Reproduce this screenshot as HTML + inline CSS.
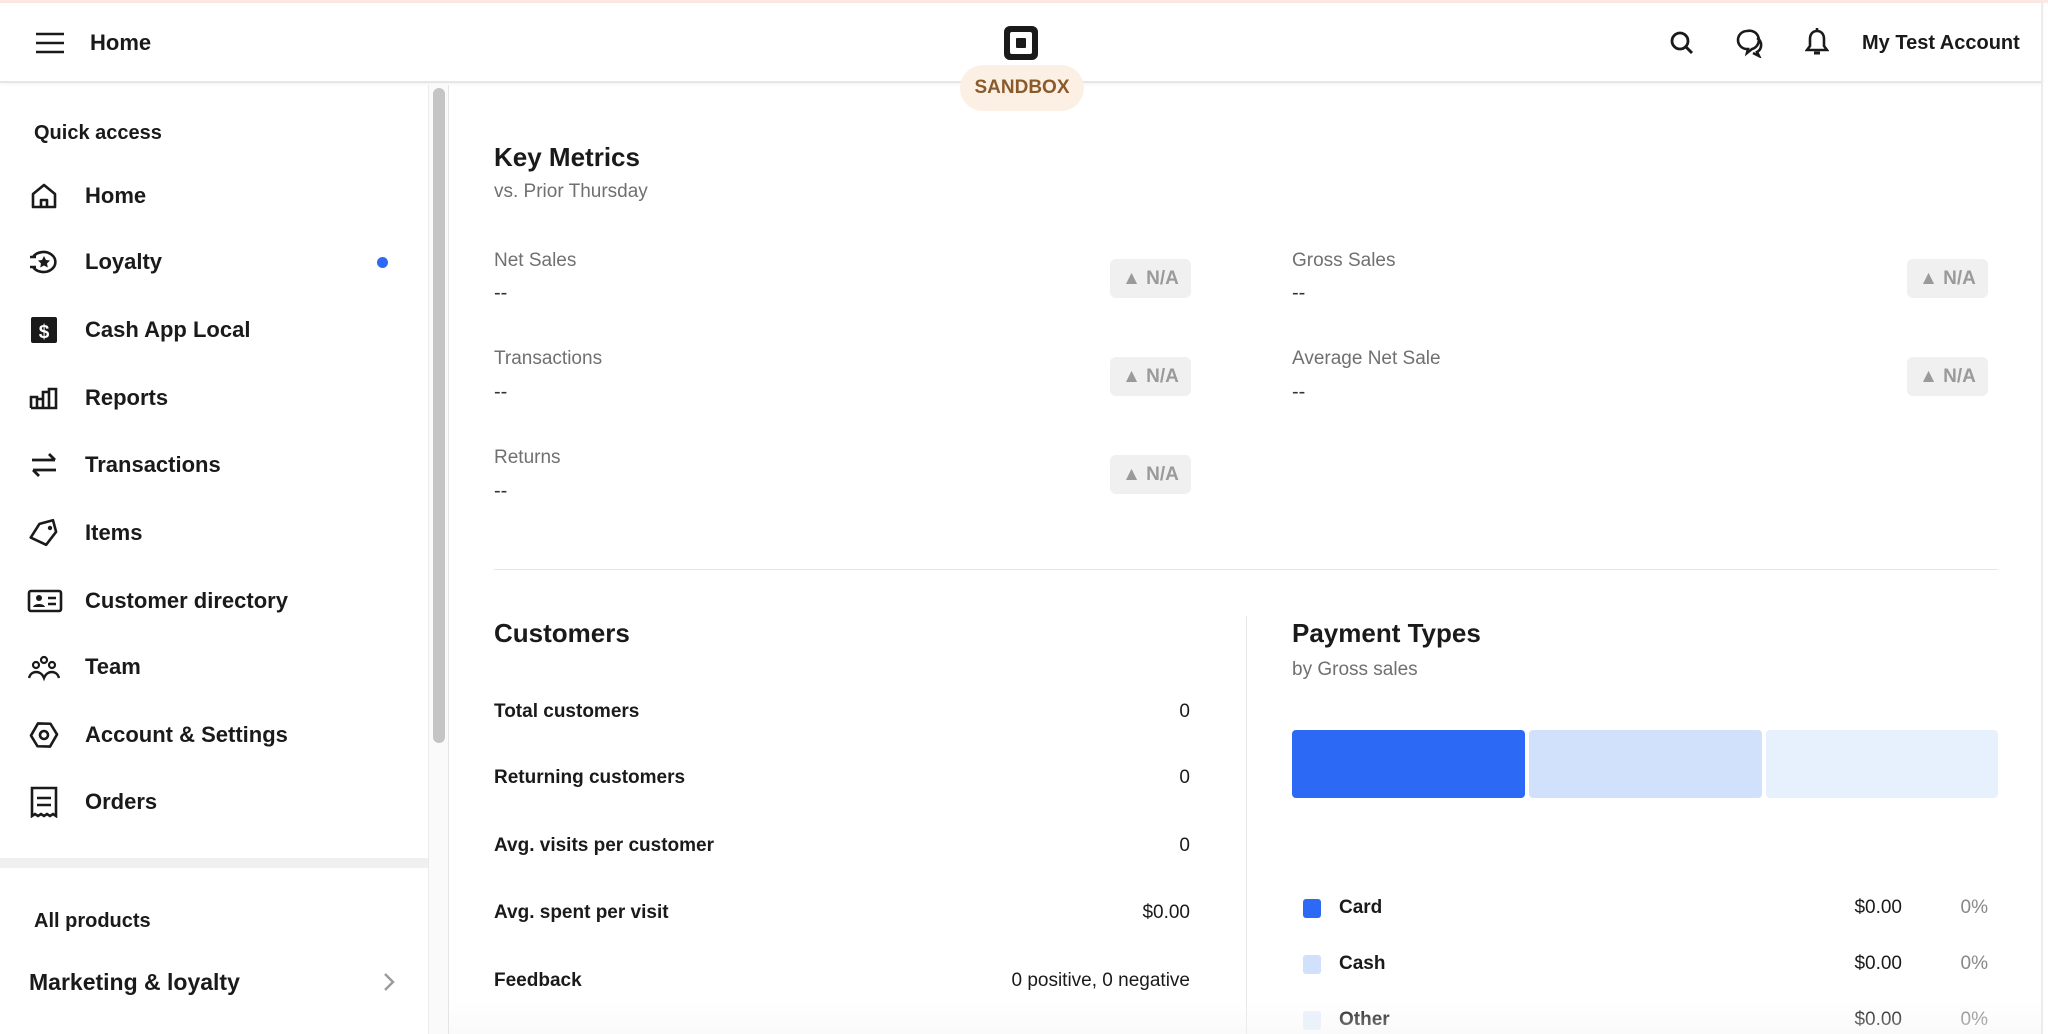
<!DOCTYPE html>
<html><head><meta charset="utf-8"><style>
*{margin:0;padding:0;box-sizing:border-box}
body{width:2048px;height:1034px;overflow:hidden;background:#fff;font-family:"Liberation Sans",sans-serif;color:#1a1a1a;position:relative}
.a{position:absolute;white-space:nowrap}
.nav{font-size:22px;font-weight:700;left:85px;line-height:30px}
.ic{position:absolute;left:28px;width:32px;height:32px}
.lbl{font-size:19px;color:#707070;line-height:24px}
.dash{font-size:20px;color:#333;line-height:24px}
.badge{position:absolute;width:81px;height:39px;background:#f0f0f0;border-radius:6px;color:#9a9a9a;font-size:19px;font-weight:700;text-align:center;line-height:39px}
.row{font-size:19px;font-weight:700;line-height:24px;left:494px}
.val{font-size:19px;line-height:24px;right:858px;text-align:right}
.h2{font-size:26px;font-weight:700;line-height:32px}
.sub{font-size:19px;color:#707070;line-height:24px}
</style></head><body>
<div class="a" style="left:0;top:0;width:2048px;height:3px;background:#fbe9e2"></div>
<!-- header -->
<div class="a" style="left:0;top:3px;width:2043px;height:80px;background:#fff;border-bottom:2px solid #e6e6e6;box-shadow:0 1px 3px rgba(0,0,0,.06)"></div>
<svg class="a" style="left:36px;top:32px" width="28" height="22" viewBox="0 0 28 22"><path d="M0 2h28M0 11h28M0 20h28" stroke="#1a1a1a" stroke-width="2.6"/></svg>
<div class="a" style="left:90px;top:29px;font-size:22px;font-weight:700;line-height:28px">Home</div>
<svg class="a" style="left:1004px;top:26px" width="34" height="34" viewBox="0 0 34 34"><rect x="0" y="0" width="34" height="34" rx="6" fill="#1a1a1a"/><rect x="6" y="6" width="22" height="22" rx="2" fill="#fff"/><rect x="12" y="12" width="10" height="10" rx="1" fill="#1a1a1a"/></svg>
<div class="a" style="left:960px;top:65px;width:124px;height:46px;border-radius:23px;background:#fcf0e4;color:#8a5a2b;font-size:19px;font-weight:700;text-align:center;line-height:46px">SANDBOX</div>
<svg class="a" style="left:1669px;top:30px" width="26" height="26" viewBox="0 0 26 26"><circle cx="11" cy="11" r="8" fill="none" stroke="#1a1a1a" stroke-width="2.8"/><path d="M17 17l6 6" stroke="#1a1a1a" stroke-width="3"/></svg>
<svg class="a" style="left:1735px;top:28px" width="32" height="30" viewBox="0 0 32 30"><path d="M12 3a9 9 0 1 0 0 18h1l-1 4 5-4a9 9 0 0 0-5-18z" fill="none" stroke="#1a1a1a" stroke-width="2.6"/><path d="M22 10a8 8 0 0 1 0 14l2 4-6-3" fill="none" stroke="#1a1a1a" stroke-width="2.6"/></svg>
<svg class="a" style="left:1805px;top:28px" width="24" height="30" viewBox="0 0 24 30"><path d="M12 3c-5 0-7 4-7 8v7l-3 4h20l-3-4v-7c0-4-2-8-7-8z" fill="none" stroke="#1a1a1a" stroke-width="2.6"/><path d="M9 25h6" stroke="#1a1a1a" stroke-width="3"/><path d="M12 0v3" stroke="#1a1a1a" stroke-width="2.6"/></svg>
<div class="a" style="left:1862px;top:30px;font-size:20px;font-weight:700;line-height:26px">My Test Account</div>
<!-- right border -->
<div class="a" style="left:2041px;top:0;width:2px;height:1034px;background:#ececec"></div>
<!-- sidebar -->
<div class="a" style="left:428px;top:85px;width:21px;height:949px;background:#fafafa;border-left:1px solid #ececec;border-right:1px solid #e4e4e4"></div>
<div class="a" style="left:433px;top:88px;width:12px;height:655px;border-radius:6px;background:#c4c4c4"></div>
<div class="a" style="left:34px;top:121px;font-size:20px;font-weight:700;line-height:24px">Quick access</div>

<svg class="ic" style="top:180px" viewBox="0 0 32 32"><path d="M5 14L16 5l11 9v13H5z M13 27v-7h6v7" fill="none" stroke="#1a1a1a" stroke-width="2.6" stroke-linejoin="round"/></svg>
<div class="a nav" style="top:181px">Home</div>
<svg class="ic" style="top:246px" viewBox="0 0 32 32"><path d="M5 11a12 10 0 1 1 0 10" fill="none" stroke="#1a1a1a" stroke-width="2.6"/><path d="M2 11h6M2 21h6" stroke="#1a1a1a" stroke-width="2.4"/><path d="M16 10l2 4 4 .5-3 3 .8 4-3.8-2-3.8 2 .8-4-3-3 4-.5z" fill="#1a1a1a"/></svg>
<div class="a nav" style="top:247px">Loyalty</div>
<div class="a" style="left:377px;top:257px;width:11px;height:11px;border-radius:50%;background:#2c6af6"></div>
<svg class="ic" style="top:314px" viewBox="0 0 32 32"><rect x="3" y="3" width="26" height="26" rx="2" fill="#1a1a1a"/><text x="16" y="24" font-size="19" font-weight="700" fill="#fff" text-anchor="middle" font-family="Liberation Sans">$</text></svg>
<div class="a nav" style="top:315px">Cash App Local</div>
<svg class="ic" style="top:382px" viewBox="0 0 32 32"><path d="M3 26V15h6v11M9 26V17h6v9M15 26V10h6v16M21 26V7h7v19z M3 26h25" fill="none" stroke="#1a1a1a" stroke-width="2.6"/></svg>
<div class="a nav" style="top:383px">Reports</div>
<svg class="ic" style="top:449px" viewBox="0 0 32 32"><path d="M4 11h23M21 5l6 6M28 21H5M11 27l-6-6" fill="none" stroke="#1a1a1a" stroke-width="2.8"/></svg>
<div class="a nav" style="top:450px">Transactions</div>
<svg class="ic" style="top:517px" viewBox="0 0 32 32"><path d="M2 17L14 6h14v12L15 28z" fill="none" stroke="#1a1a1a" stroke-width="2.6" stroke-linejoin="round" transform="rotate(-15 16 16)"/><circle cx="22" cy="11" r="2.2" fill="#1a1a1a"/></svg>
<div class="a nav" style="top:518px">Items</div>
<svg class="ic" style="top:585px;left:27px;width:36px" viewBox="0 0 36 32"><rect x="2" y="6" width="32" height="20" rx="2" fill="none" stroke="#1a1a1a" stroke-width="2.6"/><circle cx="12" cy="13" r="3" fill="#1a1a1a"/><path d="M6 22c1-4 11-4 12 0z" fill="#1a1a1a"/><path d="M21 13h8M21 19h8" stroke="#1a1a1a" stroke-width="2.4"/></svg>
<div class="a nav" style="top:586px">Customer directory</div>
<svg class="ic" style="top:651px" viewBox="0 0 32 32"><circle cx="16" cy="9" r="3" fill="none" stroke="#1a1a1a" stroke-width="2.2"/><circle cx="8" cy="14" r="3" fill="none" stroke="#1a1a1a" stroke-width="2.2"/><circle cx="24" cy="14" r="3" fill="none" stroke="#1a1a1a" stroke-width="2.2"/><path d="M1 27c2-8 12-8 15 0c3-8 13-8 15 0" fill="none" stroke="#1a1a1a" stroke-width="2.4"/></svg>
<div class="a nav" style="top:652px">Team</div>
<svg class="ic" style="top:719px" viewBox="0 0 32 32"><path d="M16 3l11 6v14l-11 6-11-6V9z" fill="none" stroke="#1a1a1a" stroke-width="2.6" stroke-linejoin="round" transform="rotate(30 16 16)"/><circle cx="16" cy="16" r="4" fill="none" stroke="#1a1a1a" stroke-width="2.6"/></svg>
<div class="a nav" style="top:720px">Account &amp; Settings</div>
<svg class="ic" style="top:786px" viewBox="0 0 32 32"><path d="M4 2h24v28l-3-2-3 2-3-2-3 2-3-2-3 2-3-2-3 2z" fill="none" stroke="#1a1a1a" stroke-width="2.6"/><path d="M9 12h14M9 19h14" stroke="#1a1a1a" stroke-width="2.4"/></svg>
<div class="a nav" style="top:787px">Orders</div>

<div class="a" style="left:0;top:858px;width:428px;height:10px;background:#f0f0f0"></div>
<div class="a" style="left:34px;top:909px;font-size:20px;font-weight:700;line-height:24px">All products</div>
<div class="a" style="left:29px;top:967px;font-size:23px;font-weight:700;line-height:30px">Marketing &amp; loyalty</div>
<svg class="a" style="left:382px;top:971px" width="14" height="22" viewBox="0 0 14 22"><path d="M3 3l8 8-8 8" fill="none" stroke="#9a9a9a" stroke-width="2.4"/></svg>

<!-- content -->
<div class="a h2" style="left:494px;top:141px">Key Metrics</div>
<div class="a sub" style="left:494px;top:180px">vs. Prior Thursday</div>

<div class="a lbl" style="left:494px;top:249px">Net Sales</div><div class="a dash" style="left:494px;top:281px">--</div>
<div class="badge" style="left:1110px;top:259px">▲ N/A</div>
<div class="a lbl" style="left:1292px;top:249px">Gross Sales</div><div class="a dash" style="left:1292px;top:281px">--</div>
<div class="badge" style="left:1907px;top:259px">▲ N/A</div>
<div class="a lbl" style="left:494px;top:347px">Transactions</div><div class="a dash" style="left:494px;top:380px">--</div>
<div class="badge" style="left:1110px;top:357px">▲ N/A</div>
<div class="a lbl" style="left:1292px;top:347px">Average Net Sale</div><div class="a dash" style="left:1292px;top:380px">--</div>
<div class="badge" style="left:1907px;top:357px">▲ N/A</div>
<div class="a lbl" style="left:494px;top:446px">Returns</div><div class="a dash" style="left:494px;top:479px">--</div>
<div class="badge" style="left:1110px;top:455px">▲ N/A</div>

<div class="a" style="left:494px;top:569px;width:1504px;height:1px;background:#e6e6e6"></div>
<div class="a" style="left:1246px;top:616px;width:1px;height:418px;background:#e6e6e6"></div>

<div class="a h2" style="left:494px;top:617px">Customers</div>
<div class="a row" style="top:700px">Total customers</div><div class="a val" style="top:700px">0</div>
<div class="a row" style="top:766px">Returning customers</div><div class="a val" style="top:766px">0</div>
<div class="a row" style="top:834px">Avg. visits per customer</div><div class="a val" style="top:834px">0</div>
<div class="a row" style="top:901px">Avg. spent per visit</div><div class="a val" style="top:901px">$0.00</div>
<div class="a row" style="top:969px">Feedback</div><div class="a val" style="top:969px">0 positive, 0 negative</div>

<div class="a h2" style="left:1292px;top:617px">Payment Types</div>
<div class="a sub" style="left:1292px;top:658px">by Gross sales</div>
<div class="a" style="left:1292px;top:730px;width:233px;height:68px;background:#2c6af6;border-radius:4px"></div>
<div class="a" style="left:1529px;top:730px;width:233px;height:68px;background:#d1e0fb;border-radius:4px"></div>
<div class="a" style="left:1766px;top:730px;width:232px;height:68px;background:#e7f0fd;border-radius:4px"></div>

<div class="a" style="left:1303px;top:899px;width:18px;height:19px;background:#2c6af6;border-radius:3px"></div>
<div class="a" style="left:1339px;top:896px;font-size:19px;font-weight:700;line-height:24px">Card</div>
<div class="a" style="left:1303px;top:955px;width:18px;height:19px;background:#d1e0fb;border-radius:3px"></div>
<div class="a" style="left:1339px;top:952px;font-size:19px;font-weight:700;line-height:24px">Cash</div>
<div class="a" style="left:1303px;top:1011px;width:18px;height:19px;background:#e7f0fd;border-radius:3px"></div>
<div class="a" style="left:1339px;top:1008px;font-size:19px;font-weight:700;line-height:24px">Other</div>
<div class="a" style="right:146px;top:896px;font-size:19px;line-height:24px">$0.00</div>
<div class="a" style="right:146px;top:952px;font-size:19px;line-height:24px">$0.00</div>
<div class="a" style="right:146px;top:1008px;font-size:19px;line-height:24px">$0.00</div>
<div class="a" style="right:60px;top:896px;font-size:19px;line-height:24px;color:#888">0%</div>
<div class="a" style="right:60px;top:952px;font-size:19px;line-height:24px;color:#888">0%</div>
<div class="a" style="right:60px;top:1008px;font-size:19px;line-height:24px;color:#888">0%</div>
<div class="a" style="left:449px;top:1000px;width:1592px;height:34px;background:linear-gradient(rgba(255,255,255,0),rgba(245,245,245,.5))"></div>
</body></html>
